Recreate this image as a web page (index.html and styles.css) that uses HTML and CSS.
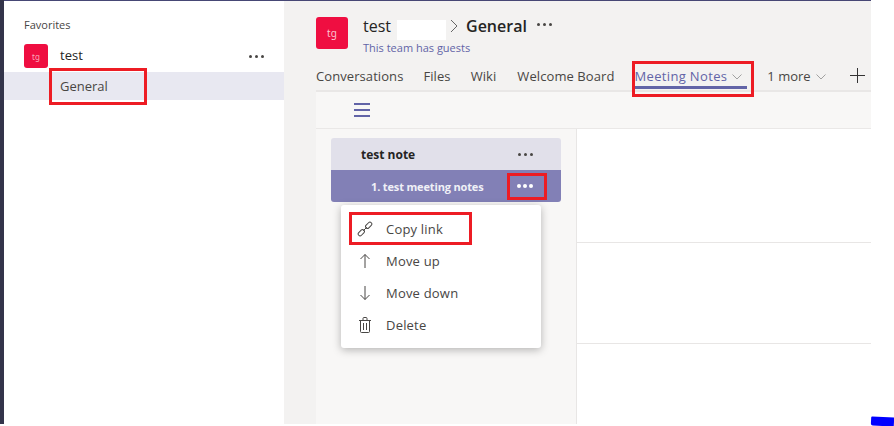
FILE: index.html
```html
<!DOCTYPE html>
<html lang="en">
<head>
<meta charset="utf-8">
<title>Teams</title>
<link rel="stylesheet" href="styles.css">
</head>
<body>
<div class="app">
  <div class="strip"></div>
  <aside class="sidebar">
    <div class="fav-label">Favorites</div>
    <div class="team-row">
      <div class="avatar-sm">tg</div>
      <span class="team-name">test</span>
      <span class="dots dots-dark"><i></i><i></i><i></i></span>
    </div>
    <div class="channel-row">General</div>
  </aside>
  <main class="main">
    <header class="header">
      <div class="avatar-lg">tg</div>
      <div class="title-block">
        <div class="title">
          <span class="title-team">test</span>
          <span class="redact"></span>
          <svg class="crumb" width="8" height="14" viewBox="0 0 8 14"><path d="M1 1l6 6-6 6" fill="none" stroke="#666" stroke-width="1"/></svg>
          <b class="title-channel">General</b>
          <span class="dots dots-dark title-dots"><i></i><i></i><i></i></span>
        </div>
        <div class="guests">This team has guests</div>
      </div>
    </header>
    <nav class="tabs">
      <span class="tab">Conversations</span>
      <span class="tab">Files</span>
      <span class="tab">Wiki</span>
      <span class="tab tab-board">Welcome Board</span>
      <span class="tab tab-active">Meeting Notes
        <svg class="chev" width="10" height="6" viewBox="0 0 10 6"><path d="M.5.5l4.5 4.5 4.5-4.5" fill="none" stroke="#8b8b8b" stroke-width=".8"/></svg>
      </span>
      <span class="tab tab-more">1 more
        <svg class="chev" width="10" height="6" viewBox="0 0 10 6"><path d="M.5.5l4.5 4.5 4.5-4.5" fill="none" stroke="#8b8b8b" stroke-width=".8"/></svg>
      </span>
      <svg class="plus" width="15" height="15" viewBox="0 0 15 15"><path d="M7.5 0v15M0 7.5h15" stroke="#333" stroke-width="1" fill="none"/></svg>
    </nav>
    <section class="content">
      <div class="toolbar">
        <svg class="burger" width="16" height="14" viewBox="0 0 16 14"><path d="M0 1h16M0 7h16M0 13h16" stroke="#6264a7" stroke-width="2" fill="none"/></svg>
      </div>
      <div class="notebook">
        <div class="sections">
          <div class="section-row"><span>test note</span><span class="dots dots-dark"><i></i><i></i><i></i></span></div>
          <div class="page-row"><span>1. test meeting notes</span><span class="dots dots-white"><i></i><i></i><i></i></span></div>
        </div>
        <div class="canvas">
          <div class="band band-a"></div>
          <div class="band band-b"></div>
          <div class="band band-c"></div>
        </div>
      </div>
    </section>
  </main>
  <div class="rest"></div>
</div>

<ul class="menu">
  <li class="menu-item">
    <svg width="16" height="16" viewBox="0 0 16 16" fill="none" stroke="#484644"><rect x="-3.6" y="-1.9" width="7.2" height="3.8" rx="1.9" transform="translate(4.3 11.7) rotate(-45)"/><rect x="-3.6" y="-1.9" width="7.2" height="3.8" rx="1.9" transform="translate(11.7 4.3) rotate(-45)"/><path d="M6.2 9.8l3.6-3.6"/></svg>
    Copy link
  </li>
  <li class="menu-item">
    <svg width="16" height="16" viewBox="0 0 16 16" fill="none" stroke="#484644"><path d="M8 15V1.5M3.5 6l4.5-4.5 4.5 4.5"/></svg>
    Move up
  </li>
  <li class="menu-item">
    <svg width="16" height="16" viewBox="0 0 16 16" fill="none" stroke="#484644"><path d="M8 1v13.5M3.5 10l4.5 4.5 4.5-4.5"/></svg>
    Move down
  </li>
  <li class="menu-item">
    <svg width="16" height="16" viewBox="0 0 16 16" fill="none" stroke="#484644"><path d="M2 3.5h12M3.5 3.5v11a1 1 0 0 0 1 1h7a1 1 0 0 0 1-1v-11M6 3.5V1.5a1 1 0 0 1 1-1h2a1 1 0 0 1 1 1v2M6.5 6v7M9.5 6v7"/></svg>
    Delete
  </li>
</ul>

<div class="mark mark-general"></div>
<div class="mark mark-tab"></div>
<div class="mark mark-dots"></div>
<div class="mark mark-copy"></div>
<div class="scribble"></div>
</body>
</html>
```
FILE: styles.css
```css
* { box-sizing: border-box; }
html, body { margin: 0; padding: 0; }
body {
  width: 894px;
  height: 426px;
  overflow: hidden;
  background: #fff;
  font-family: "Open Sans", "Noto Sans", sans-serif;
  color: #252423;
  position: relative;
}
.app { display: flex; height: 424px; }
.strip { width: 4px; background: #33344a; flex: none; }
.sidebar { width: 280px; flex: none; background: #fff; border-top: 1px solid #464775; padding-top: 16px; }
.fav-label { margin-left: 20px; font-size: 11px; line-height: 15px; color: #484644; }
.team-row { display: flex; align-items: center; height: 32px; margin-top: 8px; padding-left: 20px; }
.avatar-sm {
  width: 24px; height: 24px; border-radius: 3px; background: #ef0e41; color: #f9a9bb;
  font-family: "Noto Sans", sans-serif; font-size: 8px; display: flex; align-items: center; justify-content: center;
}
.team-name { margin-left: 12px; font-size: 13px; line-height: 18px; margin-top: -3px; color: #252423; flex: 1; }
.dots { display: inline-flex; gap: 3px; }
.dots i { display: block; width: 3px; height: 3px; border-radius: 50%; background: #484644; }
.dots-white { gap: 2px; }
.dots-white i { background: #fff; width: 4px; height: 4px; }
.team-row .dots { margin-right: 20px; }
.channel-row {
  height: 28px; padding-left: 56px; background: #e8e8f1;
  font-size: 13px; line-height: 28px; color: #484644;
}
.main { width: 587px; flex: none; background: #f3f2f1; border-top: 1px solid #464775; padding-left: 32px; display: flex; flex-direction: column; }
.header { display: flex; height: 59px; padding-top: 16px; }
.avatar-lg {
  width: 32px; height: 32px; border-radius: 3px; background: #ef0e41; color: #fbc4d0;
  font-family: "Noto Sans", sans-serif; font-size: 10px; display: flex; align-items: center; justify-content: center;
}
.title-block { margin-left: 15px; margin-top: -1px; }
.title { display: flex; align-items: center; height: 20px; font-size: 16px; line-height: 20px; }
.title-team { color: #252423; }
.redact { width: 49px; height: 20px; margin-left: 6px; margin-top: 8px; background: #fff; }
.crumb { margin-left: 4px; }
.title-channel { margin-left: 8px; font-weight: 600; }
.title-dots { margin-left: 10px; margin-top: -4px; }
.guests { font-size: 11px; line-height: 15px; margin-top: 4px; color: #6264a7; }
.tabs {
  display: flex; align-items: flex-start; height: 32px; border-bottom: 2px solid #e9e7e6;
  font-size: 13px; line-height: 18px; letter-spacing: .08px; color: #484644; position: relative;
}
.tab { margin-right: 20px; display: flex; align-items: center; white-space: nowrap; height: 18px; margin-top: 7px; }
.tab-board { margin-left: 1px; }
.tab-active { color: #6264a7; position: relative; margin-right: 25px; letter-spacing: .35px; }
.tab-active::after { content: ""; position: absolute; left: 0; right: -5px; top: 19px; height: 3px; background: #6264a7; }
.tab-more { letter-spacing: 0; margin-right: 24px; }
.chev { margin-left: 5px; margin-top: 2px; }
.plus { margin-top: 8px; }
.content { flex: 1; background: #f8f7f6; display: flex; flex-direction: column; }
.toolbar { height: 37px; border-bottom: 1px solid #eae8e7; padding: 11px 0 0 38px; }
.burger { display: block; }
.notebook { flex: 1; display: flex; }
.sections { width: 260px; flex: none; padding: 9px 15px 0; }
.section-row, .page-row { display: flex; align-items: center; justify-content: space-between; height: 32px; font-size: 12px; font-weight: 700; }
.section-row { background: #e1e0ea; border-radius: 3px 3px 0 0; padding: 0 28px 0 30px; color: #252423; }
.page-row { background: #8280b6; border-radius: 0 0 3px 3px; padding: 0 28px 0 40px; color: #f0f0f7; font-size: 11px; letter-spacing: -.15px; }
.canvas { flex: 1; background: #fff; border-left: 1px solid #e8e6e5; display: flex; flex-direction: column; }
.band { border-bottom: 1px solid #e8e6e5; }
.band-a { height: 114px; }
.band-b { height: 101px; }
.band-c { flex: 1; border-bottom: 0; }
.rest { flex: 1; background: #fff; }
.menu {
  position: absolute; left: 341px; top: 205px; width: 200px; height: 143px; margin: 0; padding: 8px 0 7px;
  list-style: none; background: #fff; border-radius: 3px; box-shadow: 0 2px 8px rgba(0,0,0,.28);
}
.menu-item { display: flex; align-items: center; gap: 13px; height: 32px; padding-left: 16px; font-size: 13px; letter-spacing: .2px; color: #484644; }
.mark { position: absolute; border: 3px solid #ed1c24; }
.mark-general { left: 49px; top: 68px; width: 98px; height: 37px; }
.mark-tab { left: 632px; top: 61px; width: 122px; height: 36px; }
.mark-dots { left: 507px; top: 173px; width: 40px; height: 27px; }
.mark-copy { left: 349px; top: 212px; width: 123px; height: 33px; }
.scribble { position: absolute; left: 871px; top: 417px; width: 23px; height: 9px; background: #0000ff; border-radius: 1px 0 0 2px; transform: rotate(3deg); }
```
